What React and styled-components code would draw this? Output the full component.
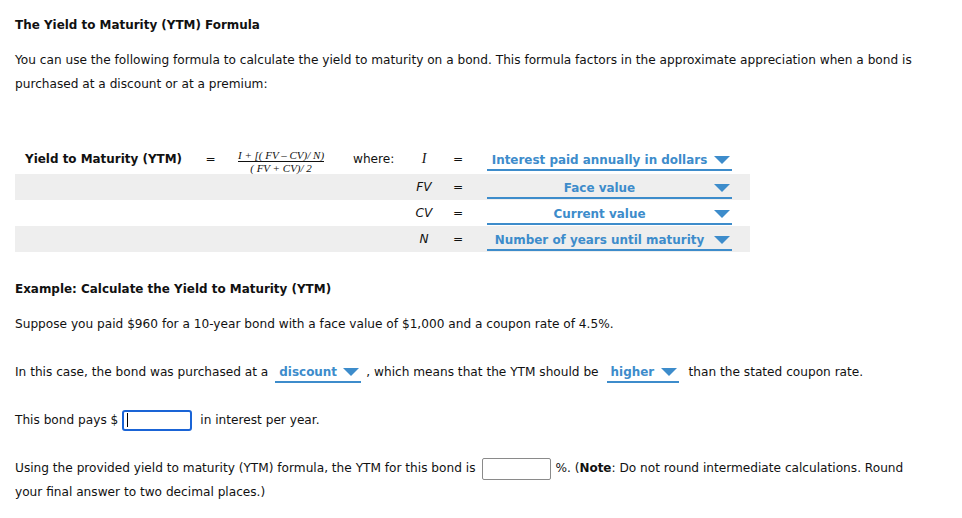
import React from 'react';
import styled, { createGlobalStyle } from 'styled-components';

const GlobalStyle = createGlobalStyle`
  body {
    margin: 0;
    background: #fff;
    color: #111;
    font-family: "DejaVu Sans", Verdana, sans-serif;
    font-size: 12.15px;
  }
  b {
    font-size: 11.95px;
  }
`;

const Page = styled.div`
  width: 902px;
  padding: 13px 15px 0 15px;
  line-height: 24px;
`;

const Title = styled.div`
  font-weight: bold;
  font-size: 11.95px;
`;

const Para = styled.p`
  margin: ${p => p.$gap || 12}px 0 0 0;
`;

const FormulaTable = styled.table`
  margin-top: 47px;
  width: 735px;
  border-collapse: collapse;
  table-layout: fixed;
`;

const Row = styled.tr`
  background: ${p => (p.$shaded ? '#eeeeee' : 'transparent')};
  height: ${p => p.$h || 26}px;
  td {
    padding: 0;
    vertical-align: middle;
  }
`;

const LabelCell = styled.td`
  font-weight: bold;
  font-size: 11.95px;
  padding-left: 10px !important;
`;

const Center = styled.td`
  text-align: center;
`;

const Var = styled.td`
  text-align: center;
  font-style: italic;
`;

const Fraction = styled.span`
  display: inline-flex;
  flex-direction: column;
  align-items: center;
  font-family: "Liberation Serif", "Times New Roman", serif;
  font-style: italic;
  font-size: 11px;
  line-height: 12px;
  margin-left: 14px;
  span + span {
    border-top: 1px solid #111;
    padding: 0 6px;
    align-self: stretch;
    text-align: center;
  }
`;

const Where = styled.td`
  padding-left: 13px !important;
`;

const DropCell = styled.td`
  padding-left: 14px !important;
`;

const Select = styled.span`
  display: ${p => (p.$block ? 'flex' : 'inline-flex')};
  align-items: center;
  justify-content: space-between;
  width: ${p => p.$w}px;
  box-sizing: border-box;
  border-bottom: 2px solid #3d8ccb;
  color: #3d8ccb;
  font-weight: bold;
  font-size: 11.95px;
  line-height: 18px;
  padding: 0 2px 0 ${p => p.$pl ?? 4}px;
  margin: ${p => p.$m || '0'};
  vertical-align: baseline;
  margin-top: ${p => (p.$block ? 4 : 0)}px;
`;

const SelectText = styled.span`
  flex: 1;
  text-align: ${p => (p.$left ? 'left' : 'center')};
  white-space: nowrap;
`;

const Arrow = () => (
  <svg width="16" height="8" viewBox="0 0 16 8" style={{ flex: 'none', marginLeft: 6 }}>
    <path d="M0 0 H16 L8 8 Z" fill="#3d8ccb" />
  </svg>
);

const InputWrap = styled.span`
  position: relative;
  display: inline-block;
  vertical-align: middle;
  margin: ${p => p.$m};
`;

const AnswerInput = styled.input`
  box-sizing: border-box;
  width: ${p => p.$w}px;
  height: ${p => p.$h}px;
  border: ${p => (p.$focus ? '2px solid #1a64d6' : '1px solid #8a8a8a')};
  border-radius: ${p => (p.$focus ? 3 : 2)}px;
  outline: none;
  padding: 0 4px;
  font: inherit;
  display: block;
`;

const Caret = styled.span`
  position: absolute;
  left: 5px;
  top: 3px;
  width: 1px;
  height: 14px;
  background: #000;
`;

export default function App() {
  return (
    <>
      <GlobalStyle />
      <Page>
        <Title>The Yield to Maturity (YTM) Formula</Title>
        <Para $gap={11}>
          You can use the following formula to calculate the yield to maturity on a bond. This formula factors in the
          approximate appreciation when a bond is purchased at a discount or at a premium:
        </Para>

        <FormulaTable>
          <colgroup>
            <col style={{ width: 182 }} />
            <col style={{ width: 27 }} />
            <col style={{ width: 116 }} />
            <col style={{ width: 65 }} />
            <col style={{ width: 38 }} />
            <col style={{ width: 30 }} />
            <col style={{ width: 277 }} />
          </colgroup>
          <tbody>
            <Row $h={30}>
              <LabelCell>Yield to Maturity (YTM)</LabelCell>
              <Center>=</Center>
              <td>
                <Fraction>
                  <span>I + [( FV – CV)/ N)</span>
                  <span>( FV + CV)/ 2</span>
                </Fraction>
              </td>
              <Where>where:</Where>
              <Var style={{ fontFamily: '"Liberation Serif", serif', fontSize: 14 }}>I</Var>
              <Center>=</Center>
              <DropCell>
                <Select $block $w={245}>
                  <SelectText>Interest paid annually in dollars</SelectText>
                  <Arrow />
                </Select>
              </DropCell>
            </Row>
            <Row $shaded>
              <td /><td /><td /><td />
              <Var>FV</Var>
              <Center>=</Center>
              <DropCell>
                <Select $block $w={245}>
                  <SelectText>Face value</SelectText>
                  <Arrow />
                </Select>
              </DropCell>
            </Row>
            <Row>
              <td /><td /><td /><td />
              <Var>CV</Var>
              <Center>=</Center>
              <DropCell>
                <Select $block $w={245}>
                  <SelectText>Current value</SelectText>
                  <Arrow />
                </Select>
              </DropCell>
            </Row>
            <Row $shaded>
              <td /><td /><td /><td />
              <Var>N</Var>
              <Center>=</Center>
              <DropCell>
                <Select $block $w={245}>
                  <SelectText>Number of years until maturity</SelectText>
                  <Arrow />
                </Select>
              </DropCell>
            </Row>
          </tbody>
        </FormulaTable>

        <Para $gap={25}>
          <b>Example: Calculate the Yield to Maturity (YTM)</b>
        </Para>
        <Para $gap={11}>
          Suppose you paid $960 for a 10-year bond with a face value of $1,000 and a coupon rate of 4.5%.
        </Para>

        <Para $gap={24}>
          In this case, the bond was purchased at a
          <Select $w={86} $m="0 5px 0 7px">
            <SelectText $left>discount</SelectText>
            <Arrow />
          </Select>
          , which means that the YTM should be
          <Select $w={72} $m="0 10px 0 8px">
            <SelectText $left>higher</SelectText>
            <Arrow />
          </Select>
          than the stated coupon rate.
        </Para>

        <Para $gap={24}>
          This bond pays $
          <InputWrap $m="0 8px 0 4px">
            <AnswerInput $focus $w={70} $h={21} />
            <Caret />
          </InputWrap>
          in interest per year.
        </Para>

        <Para $gap={24}>
          Using the provided yield to maturity (YTM) formula, the YTM for this bond is
          <InputWrap $m="0 4px 0 7px">
            <AnswerInput $w={69} $h={22} />
          </InputWrap>
          %. (<b>Note</b>: Do not round intermediate calculations. Round your final answer to two decimal places.)
        </Para>
      </Page>
    </>
  );
}
